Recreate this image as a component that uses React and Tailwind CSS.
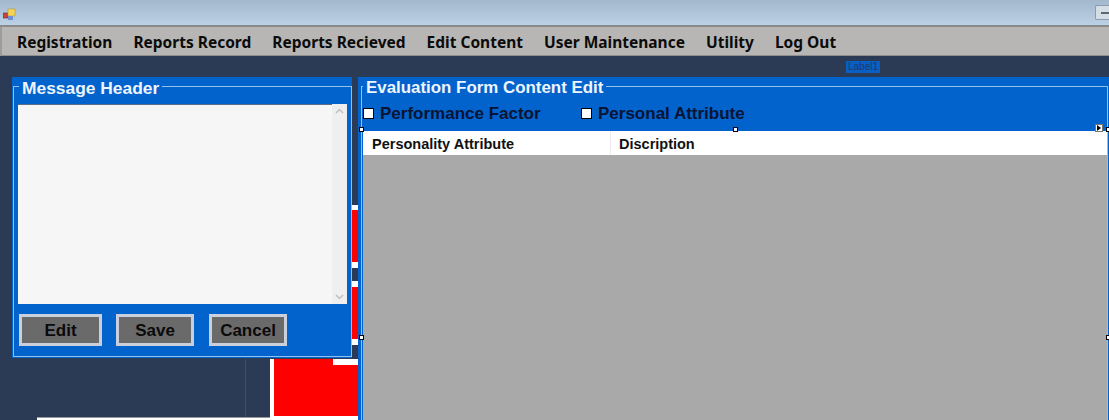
import React from "react";

const MENU_ITEMS = [
  "Registration",
  "Reports Record",
  "Reports Recieved",
  "Edit Content",
  "User Maintenance",
  "Utility",
  "Log Out",
];

const Handle = ({ className }) => (
  <span className={`absolute z-10 h-[5px] w-[5px] border border-black bg-white ${className}`} />
);

const FormButton = ({ label, className }) => (
  <button
    type="button"
    className={`h-[32px] border-[3px] border-[#c9d0dc] bg-[#6a6a6a] text-[17px] font-bold leading-none text-[#0a0a0a] ${className}`}
  >
    {label}
  </button>
);

const CheckItem = ({ label, className }) => (
  <label className={`flex items-center ${className}`}>
    <span className="h-[11px] w-[11px] border border-black bg-white" />
    <span className="ml-[6px] text-[17px] font-bold leading-none text-[#071433]">
      {label}
    </span>
  </label>
);

const App = () => {
  return (
    <div className="relative h-[420px] w-[1109px] overflow-hidden bg-[#2b3a55] font-['Liberation_Sans',sans-serif]">
      <div className="flex h-[27px] items-center justify-between border-b-2 border-[#8a8a8a] bg-gradient-to-b from-[#a3b7cd] to-[#bcd0e6] pl-[3px]">
        <svg width="13" height="13" viewBox="0 0 13 13" className="mt-[3px]">
          <rect x="0" y="5" width="5" height="5" fill="#c8443c" stroke="#7a2a28" strokeWidth="0.6" />
          <rect x="5" y="1" width="7" height="7" fill="#f3d35a" stroke="#b69a3a" strokeWidth="0.6" />
          <rect x="5" y="8" width="5" height="4" fill="#6d8fd6" />
        </svg>
        <div className="flex h-[15px] w-[14px] items-center justify-end rounded-l-[2px] border border-r-0 border-[#8c9bad] bg-[#d5dde6] pl-[3px]">
          <span className="h-[2px] w-[8px] bg-[#5c6670]" />
        </div>
      </div>

      <div className="flex h-[29px] items-center gap-[21px] border-b border-[#8d8d8d] border-l-2 border-l-[#9c9c9c] bg-[#b7b6b5] pl-[15px] pt-[3px] font-['Noto_Sans',sans-serif] text-[15.5px] font-bold text-[#0b0b0b]">
        {MENU_ITEMS.map((item) => (
          <span key={item}>{item}</span>
        ))}
      </div>

      <div className="flex h-[21px] items-start pl-[846px] pt-[5px]">
        <span className="bg-[#0a5fc4] px-[2px] text-[10px] leading-[12px] text-[#1f3a66]">Label1</span>
      </div>

      <div className="flex h-[343px] pl-[12px]">
        <div className="flex w-[346px] shrink-0 flex-col">
          <div className="flex h-[282px]">
            <div className="h-[281px] w-[340px] bg-[#0363cc] px-px pb-px">
              <fieldset className="h-full border border-[#8fc0ee] px-[4px]">
                <legend className="ml-[1px] px-[3px] text-[17.4px] font-bold leading-[18px] text-[#eef5ff]">
                  <span className="relative top-[2px]">Message Header</span>
                </legend>
                <div className="mt-[9px] flex h-[200px] w-[329px]">
                  <div className="w-[314px] border-t border-[#5d6f88] bg-[#f6f6f6]" />
                  <div className="flex w-[15px] flex-col items-center justify-between bg-[#efefef] py-[4px] text-[#c0c0c0]">
                    <svg width="9" height="6" viewBox="0 0 9 6" fill="none" stroke="currentColor" strokeWidth="1.5">
                      <path d="M1 5l3.5-3.5L8 5" />
                    </svg>
                    <svg width="9" height="6" viewBox="0 0 9 6" fill="none" stroke="currentColor" strokeWidth="1.5">
                      <path d="M1 1l3.5 3.5L8 1" />
                    </svg>
                  </div>
                </div>
                <div className="mt-[10px] flex pl-px">
                  <FormButton label="Edit" className="w-[83px]" />
                  <FormButton label="Save" className="ml-[14px] w-[78px]" />
                  <FormButton label="Cancel" className="ml-[15px] w-[78px]" />
                </div>
              </fieldset>
            </div>
            <div className="flex w-[6px] flex-col pt-[128px]">
              <div className="h-[5px] bg-white" />
              <div className="h-[52px] bg-[#fe0000]" />
              <div className="h-[6px] bg-white" />
              <div className="h-[13px]" />
              <div className="h-[6px] bg-white" />
              <div className="h-[52px] bg-[#fe0000]" />
              <div className="h-[6px] bg-white" />
            </div>
          </div>

          <div className="flex flex-1">
            <div className="flex w-[258px] flex-col">
              <div className="w-[234px] flex-1 border-r border-[#3f4d68]" />
              <div className="ml-[25px] h-[3px] w-[233px] border-t border-[#9a9a9a] bg-white" />
            </div>
            <div className="flex flex-1 flex-col border-l-[4px] border-white">
              <div className="h-[57px] bg-[#fe0000]">
                <div className="ml-auto h-[6px] w-[25px] bg-white" />
              </div>
              <div className="flex-1 bg-white" />
            </div>
          </div>
        </div>

        <div className="relative flex-1 bg-[#0363cc] pl-[3px] pr-px">
          <fieldset className="h-full border border-b-0 border-[#8fc0ee] pl-px pr-0">
            <legend className="px-[3px] text-[16.9px] font-bold leading-[18px] text-[#eef5ff]">
              <span className="relative top-[2px]">Evaluation Form Content Edit</span>
            </legend>
            <div className="mt-[7px] flex h-[22px] items-center">
              <CheckItem label="Performance Factor" className="w-[218px]" />
              <CheckItem label="Personal Attribute" />
            </div>
            <div className="mt-[7px] h-[300px] bg-[#a9a9a9]">
              <div className="flex h-[24px] items-center bg-white text-[14.5px] font-bold text-[#111]">
                <div className="flex h-full w-[248px] items-center border-r border-[#ececec] pl-[9px] pt-[3px]">
                  Personality Attribute
                </div>
                <div className="flex h-full items-center pl-[8px] pt-[3px]">Discription</div>
              </div>
            </div>
          </fieldset>
          <Handle className="left-[1px] top-[50px]" />
          <Handle className="left-[375px] top-[50px]" />
          <Handle className="left-[748px] top-[50px]" />
          <Handle className="left-[1px] top-[258px]" />
          <Handle className="left-[748px] top-[258px]" />
          <span className="absolute left-[737px] top-[47px] flex h-[8px] w-[8px] items-center justify-center border border-[#777] bg-white">
            <span className="h-0 w-0 border-y-[3px] border-l-[4px] border-y-transparent border-l-black" />
          </span>
        </div>
      </div>
    </div>
  );
};

export default App;
